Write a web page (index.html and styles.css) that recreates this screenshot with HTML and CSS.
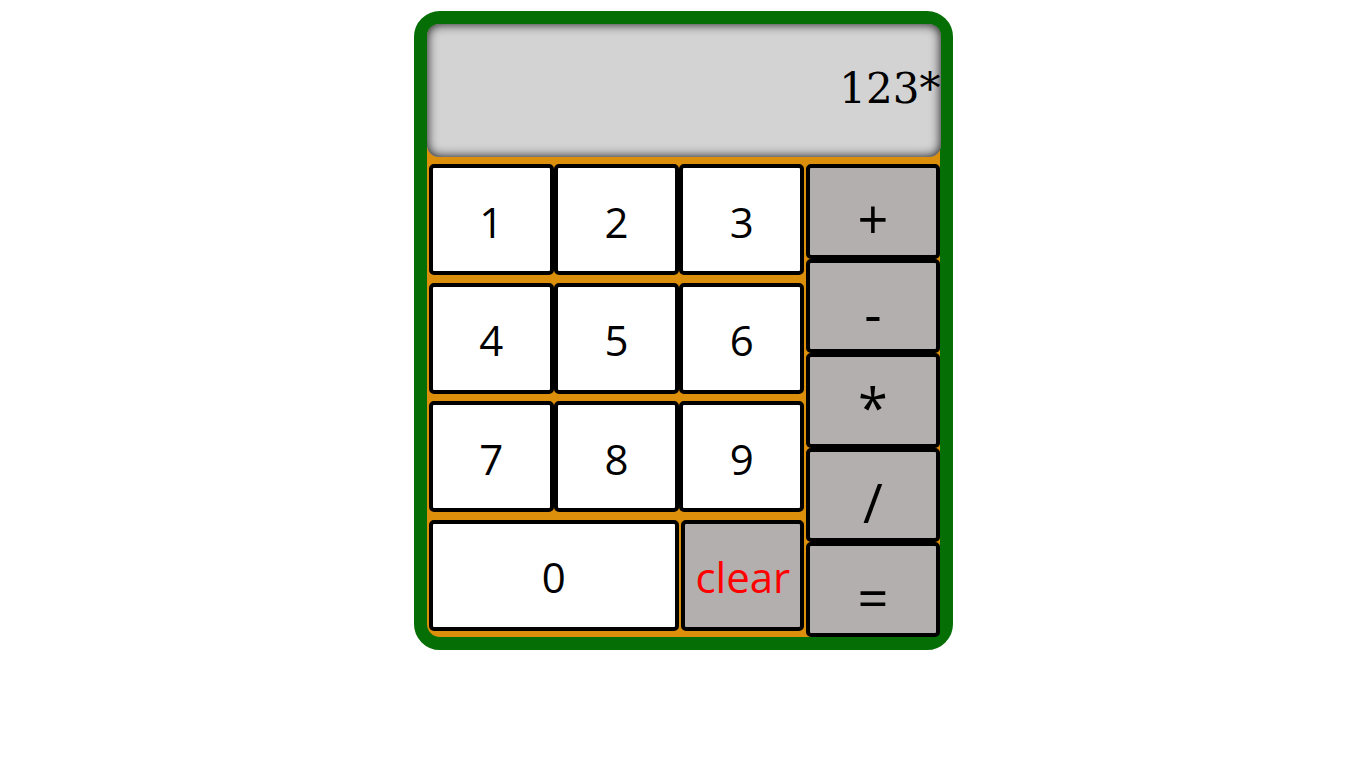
FILE: index.html
```html
<!DOCTYPE html>
<html lang="en">
<head>
<meta charset="utf-8">
<title>Calculator</title>
<link rel="stylesheet" href="styles.css">
</head>
<body>
<div class="calc">
  <div class="screen">123*</div>
  <div class="keys">
    <div class="digits">
      <button class="key">1</button>
      <button class="key">2</button>
      <button class="key">3</button>
      <button class="key">4</button>
      <button class="key">5</button>
      <button class="key">6</button>
      <button class="key">7</button>
      <button class="key">8</button>
      <button class="key">9</button>
      <button class="key zero">0</button>
      <button class="key clear">clear</button>
    </div>
    <div class="ops">
      <button class="key op">+</button>
      <button class="key op">-</button>
      <button class="key op">*</button>
      <button class="key op">/</button>
      <button class="key op">=</button>
    </div>
  </div>
</div>
</body>
</html>
```
FILE: styles.css
```css
html, body {
  margin: 0;
  padding: 0;
  background: #ffffff;
}

.calc {
  width: 513px;
  margin: 11px auto 0;
  border: 13px solid #056e05;
  border-radius: 26px;
  background: #dc8f0a;
  box-sizing: content-box;
}

.screen {
  height: 133px;
  width: 514px;
  box-sizing: border-box;
  background: #d3d3d3;
  border-radius: 12px;
  box-shadow: inset 0 0 11px rgba(0, 0, 0, 0.95);
  font-family: "DejaVu Serif", serif;
  font-size: 42px;
  line-height: 130px;
  text-align: right;
  color: #000;
  overflow: hidden;
  white-space: nowrap;
}

.keys {
  display: flex;
  padding: 7px 0 0 2px;
}

.digits {
  display: grid;
  grid-template-columns: repeat(3, 125.33px);
  grid-template-rows: repeat(4, 111px);
  row-gap: 7.5px;
  align-content: start;
}

.key {
  margin: 0;
  padding: 3px 0 0;
  border: 4px solid #000;
  border-radius: 5px;
  background: #ffffff;
  color: #000;
  font-family: "Open Sans", "Noto Sans", sans-serif;
  font-size: 42px;
  cursor: pointer;
  box-sizing: border-box;
}

.zero {
  grid-column: span 2;
}

.clear {
  margin-left: 2px;
  background: #b3afae;
  color: #ff0000;
}

.ops {
  display: flex;
  flex-direction: column;
  width: 133.5px;
  margin-left: 2px;
}

.op {
  height: 94.6px;
  background: #b3afae;
  font-size: 54px;
  padding-top: 14px;
  line-height: 1;
}
```
